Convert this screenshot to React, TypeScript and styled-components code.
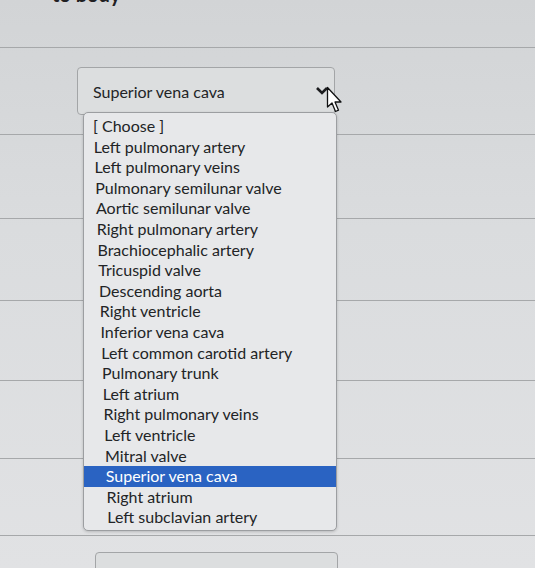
import React from 'react'
import styled, { createGlobalStyle } from 'styled-components'

const GlobalStyle = createGlobalStyle`
	html, body {
		margin: 0;
		padding: 0;
	}
	body {
		width: 535px;
		height: 568px;
		overflow: hidden;
		font-family: Lato, 'Open Sans', sans-serif;
		background: linear-gradient(180deg, #d2d4d6 0%, #dadcde 40%, #e1e2e4 100%);
	}
`

const options = [
	'[ Choose ]',
	'Left pulmonary artery',
	'Left pulmonary veins',
	'Pulmonary semilunar valve',
	'Aortic semilunar valve',
	'Right pulmonary artery',
	'Brachiocephalic artery',
	'Tricuspid valve',
	'Descending aorta',
	'Right ventricle',
	'Inferior vena cava',
	'Left common carotid artery',
	'Pulmonary trunk',
	'Left atrium',
	'Right pulmonary veins',
	'Left ventricle',
	'Mitral valve',
	'Superior vena cava',
	'Right atrium',
	'Left subclavian artery',
]

const Page = styled.div`
	display: flex;
	flex-direction: column;
`

const Prompt = styled.div`
	height: 47px;
	padding-left: 52px;
	box-sizing: border-box;
	overflow: hidden;

	> span {
		display: block;
		margin-top: -18px;
		font-weight: 700;
		font-size: 20px;
		line-height: 24px;
		color: #1f2022;
	}
`

const Row = styled.div<{ $h: number; $indent: number; $top: number }>`
	height: ${(p) => p.$h}px;
	border-top: 1px solid #a6a8aa;
	box-sizing: border-box;
	padding: ${(p) => p.$top}px 0 0 ${(p) => p.$indent}px;
`

const SelectWrap = styled.div`
	position: relative;
	width: 258px;
`

const ClosedSelect = styled.div<{ $width?: number }>`
	height: 48px;
	width: ${(p) => p.$width ?? 258}px;
	box-sizing: border-box;
	border: 1px solid #a3a5a7;
	border-radius: 4px;
	background: #dcdedf;
	display: flex;
	align-items: center;
	justify-content: space-between;
	padding: 0 5px 0 15px;
	font-size: 16px;
	color: #222426;
`

const Listbox = styled.ul`
	position: absolute;
	top: 45px;
	left: 6px;
	width: 254px;
	margin: 0;
	padding: 3px 0 2px;
	list-style: none;
	box-sizing: border-box;
	border: 1px solid #9c9ea1;
	border-radius: 5px;
	background: #e7e8ea;
	box-shadow: 0 1px 3px rgba(0, 0, 0, 0.18);
	z-index: 2;
`

// the photo is taken at a slight angle, so each line sits a little further right
const Option = styled.li<{ $selected?: boolean; $step: number }>`
	height: 20.6px;
	line-height: 20.6px;
	padding-left: ${(p) => 9 + p.$step * 0.75}px;
	font-size: 16px;
	white-space: nowrap;
	color: ${(p) => (p.$selected ? '#ffffff' : '#222426')};
	background: ${(p) => (p.$selected ? '#2a63c2' : 'transparent')};
`

const Pointer = styled.svg`
	position: absolute;
	left: 249px;
	top: 19px;
	z-index: 3;
`

const Chevron = () => (
	<svg width='14' height='10' viewBox='0 0 14 10'>
		<path d='M2 2 L7 7 L12 2' fill='none' stroke='#1c1d1f' strokeWidth='2.6' />
	</svg>
)

const rows = [84, 82, 80, 78, 77]

const App = () => {
	return (
		<>
			<GlobalStyle />
			<Page>
				<Prompt>
					<span>to body</span>
				</Prompt>
				<Row $h={87} $indent={77} $top={19}>
					<SelectWrap>
						<ClosedSelect>
							<span>Superior vena cava</span>
							<Chevron />
						</ClosedSelect>
						<Pointer width='18' height='28' viewBox='0 0 18 28'>
							<path
								d='M1.5 1.5 L1.5 21 L6 17 L9.5 25.5 L12.5 24.2 L9 16 L15 16 Z'
								fill='#ffffff'
								stroke='#111213'
								strokeWidth='1.3'
								strokeLinejoin='round'
							/>
						</Pointer>
						<Listbox>
							{options.map((o, i) => (
								<Option key={o} $step={i} $selected={o === 'Superior vena cava'}>
									{o}
								</Option>
							))}
						</Listbox>
					</SelectWrap>
				</Row>
				{rows.map((h, i) => (
					<Row key={i} $h={h} $indent={77} $top={0} />
				))}
				<Row $h={60} $indent={95} $top={16}>
					<ClosedSelect $width={243}>
						<span>[ Choose ]</span>
						<Chevron />
					</ClosedSelect>
				</Row>
			</Page>
		</>
	)
}

export default App
